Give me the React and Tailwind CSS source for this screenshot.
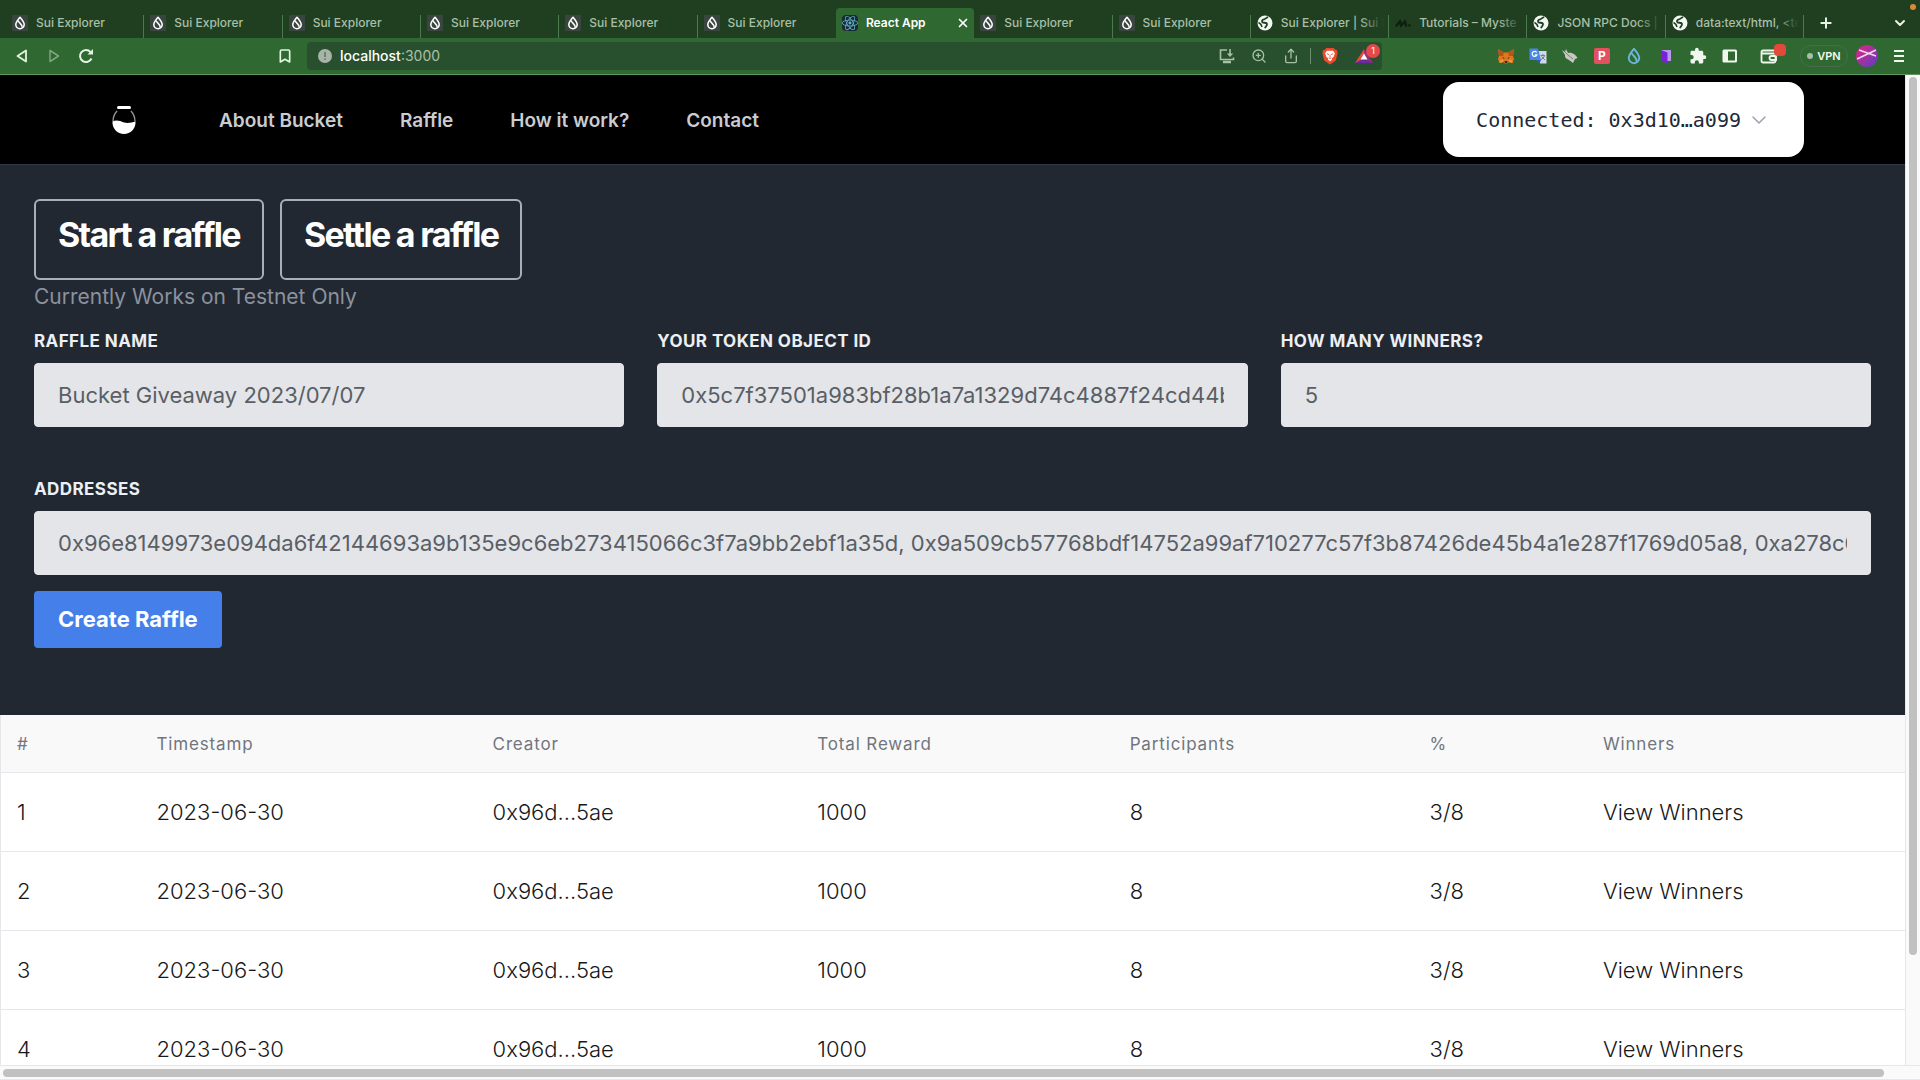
import { Bookmark, ChevronDown, Plus, Share, X, ZoomIn } from 'lucide-react';
import { MdExtension } from 'react-icons/md';
import { SiReact } from 'react-icons/si';

const tabs = [
  { title: 'Sui Explorer', icon: 'sui' },
  { title: 'Sui Explorer', icon: 'sui' },
  { title: 'Sui Explorer', icon: 'sui' },
  { title: 'Sui Explorer', icon: 'sui' },
  { title: 'Sui Explorer', icon: 'sui' },
  { title: 'Sui Explorer', icon: 'sui' },
  { title: 'React App', icon: 'react', active: true },
  { title: 'Sui Explorer', icon: 'sui' },
  { title: 'Sui Explorer', icon: 'sui' },
  { title: 'Sui Explorer | Sui D', icon: 'globe' },
  { title: 'Tutorials – Myste', icon: 'mysten' },
  { title: 'JSON RPC Docs |', icon: 'globe' },
  { title: 'data:text/html, <te', icon: 'globe' },
];

const links = ['About Bucket', 'Raffle', 'How it work?', 'Contact'];

const columns = [
  { name: '#', width: 'w-[7.35%]' },
  { name: 'Timestamp', width: 'w-[17.65%]' },
  { name: 'Creator', width: 'w-[17.05%]' },
  { name: 'Total Reward', width: 'w-[16.4%]' },
  { name: 'Participants', width: 'w-[15.75%]' },
  { name: '%', width: 'w-[9.1%]' },
  { name: 'Winners', width: '' },
];

const raffles = [1, 2, 3, 4].map((id) => ({
  id,
  timestamp: '2023-06-30',
  creator: '0x96d...5ae',
  reward: 1000,
  participants: 8,
  ratio: '3/8',
}));

function SuiDrop({ className, stroke = '#fff' }) {
  return (
    <svg viewBox="0 0 16 20" className={className} fill="none" stroke={stroke} strokeWidth="2.200" aria-hidden="true">
      <path d="M8 1.8C5.4 5.2 2 8.6 2 12.2A6 6 0 0 0 14 12.2C14 8.6 10.600 5.200 8 1.800Z" strokeLinejoin="round" />
      <path d="M5.400 6.200C5 9.500 11.500 10.500 11.200 16.800" />
    </svg>
  );
}

function Favicon({ type }) {
  if (type === 'react') {
    return (
      <span className="flex size-4 shrink-0 items-center justify-center rounded-sm bg-[#1b2a33]">
        <SiReact className="size-4 text-[#5fb6cc]" aria-hidden="true" />
      </span>
    );
  }
  if (type === 'globe') {
    return (
      <svg viewBox="0 0 16 16" className="size-4 shrink-0" aria-hidden="true">
        <circle cx="8" cy="8" r="7.500" fill="#f3f8f3" />
        <path d="M11.200 2.200C9 2.600 8.500 4.300 6.200 4.600C4.600 5.200 4.600 7 6 7.600C7.600 8 9.700 7.200 10 9.200C10.200 11 8.600 11 8 13.200" fill="none" stroke="#1f3f20" strokeWidth="1.800" />
        <path d="M1.500 7.500C3.500 8.500 4.500 10 5 12" fill="none" stroke="#1f3f20" strokeWidth="1.500" />
      </svg>
    );
  }
  if (type === 'mysten') {
    return (
      <svg viewBox="0 0 16 16" className="size-4 shrink-0" fill="none" stroke="#0d1f10" strokeWidth="2.400" strokeLinecap="round" aria-hidden="true">
        <path d="M1.500 10.500L5 6.500L6 10.500L10 6.500L11 10.500M14.500 10.200V10.300" />
      </svg>
    );
  }
  return (
    <span className="flex size-4 shrink-0 items-center justify-center bg-[#39453f]">
      <SuiDrop className="h-3.5 w-3" />
    </span>
  );
}

function TabStrip() {
  return (
    <div className="flex h-[38px] items-end bg-[#1f3f20] pl-1.5">
      <div role="tablist" className="flex min-w-0 flex-1 items-end">
        {tabs.map((tab, i) => {
          const divider = !tab.active && !tabs[i + 1]?.active;
          return (
            <div
              key={i}
              role="tab"
              aria-selected={!!tab.active}
              className={`flex h-[30px] min-w-0 flex-1 basis-0 items-center ${tab.active ? 'rounded-t bg-[#306832]' : ''}`}
            >
              <div className="flex min-w-0 flex-1 items-center gap-2 pr-1 pl-1.5">
                <Favicon type={tab.icon} />
                <span className="relative min-w-0 flex-1 overflow-hidden">
                  <span className={`block text-xs whitespace-nowrap ${tab.active ? 'font-semibold text-white' : 'font-medium text-[#a9bfa8]'}`}>
                    {tab.title}
                  </span>
                  {!tab.active && <span className="absolute inset-y-0 right-0 w-6 bg-linear-to-r from-transparent to-[#1f3f20]" />}
                </span>
                {tab.active && (
                  <button type="button" aria-label="Close tab" className="text-white">
                    <X className="size-3.5" strokeWidth={3} />
                  </button>
                )}
              </div>
              {divider && <span className="h-[23px] w-px self-end bg-[#4b7a4c]" />}
            </div>
          );
        })}
      </div>
      <div className="flex h-[30px] w-[116px] items-center justify-between pr-3 pl-3.5 text-[#e8f3e6]">
        <button type="button" aria-label="New tab">
          <Plus className="size-4" strokeWidth={3} />
        </button>
        <button type="button" aria-label="Search tabs">
          <ChevronDown className="size-4" strokeWidth={3} />
        </button>
      </div>
    </div>
  );
}

function ToolButton({ label, className = 'w-8', children }) {
  return (
    <button type="button" aria-label={label} className={`flex h-8 items-center justify-center ${className}`}>
      {children}
    </button>
  );
}

function Extensions() {
  return (
    <div className="ml-auto flex items-center pr-2 text-[#f0f8ee]">
      <ToolButton label="Wallet fox">
        <svg viewBox="0 0 18 16" className="h-4 w-[18px]">
          <path d="M1 1L7 4.500H11L17 1L16 8L17 11L15.500 15L11.500 14L10 15.500H8L6.500 14L2.500 15L1 11L2 8Z" fill="#e2761b" />
          <path d="M1 1L7 4.500L6 8L2 8ZM17 1L11 4.500L12 8L16 8Z" fill="#b5541d" />
          <path d="M5 9L7.500 10L7 11ZM13 9L10.500 10L11 11ZM7.500 13H10.500L10 15H8Z" fill="#22303a" />
          <path d="M3 12L6 11.500L6.500 14L2.500 15ZM15 12L12 11.500L11.500 14L15.500 15Z" fill="#f5923a" />
        </svg>
      </ToolButton>
      <ToolButton label="Translate">
        <svg viewBox="0 0 18 16" className="h-4 w-[18px]">
          <path d="M8 3H17.500V15.500H11Z" fill="#cfd8e6" />
          <path d="M11.500 7.500H16M13.800 6V7.500M15.500 7.500C15 9.500 13.500 11 12 11.500M12.500 8.500L16 12" stroke="#6e7f96" fill="none" />
          <path d="M0.500 0.500H9L12 12H1.500C1 12 0.500 11.600 0.500 11Z" fill="#4a86e8" />
          <path d="M7.800 4.500A2.500 2.500 0 1 0 8 6.800H5.800" stroke="#fff" strokeWidth="1.200" fill="none" />
          <path d="M7.500 12H12L10.500 15.500Z" fill="#2c5cc0" />
        </svg>
      </ToolButton>
      <ToolButton label="Feather">
        <svg viewBox="0 0 18 16" className="h-4 w-[18px]">
          <path d="M1 2L4 4L5 1L7 5C11 4 15 7 16.500 10L14 11L12 15L8 12C5 11 3.500 9 4 7Z" fill="#c6c9c2" />
          <path d="M7 7L12 11M4 4L8 8" stroke="#7d857b" fill="none" />
        </svg>
      </ToolButton>
      <ToolButton label="Pocket">
        <span className="flex size-4 items-center justify-center rounded-xs bg-[#e2515f] text-xs font-bold text-white">P</span>
      </ToolButton>
      <ToolButton label="Sui wallet">
        <SuiDrop className="h-[18px] w-3.5" stroke="#6cb5d8" />
      </ToolButton>
      <ToolButton label="Notebook">
        <svg viewBox="0 0 14 16" className="h-4 w-3.5">
          <path d="M2 2H12V13H2Z" fill="#b79af0" />
          <path d="M2 2L8.500 4.500V15.500L2 13Z" fill="#7a22d8" />
        </svg>
      </ToolButton>
      <ToolButton label="Extensions">
        <MdExtension className="size-[18px]" />
      </ToolButton>
      <ToolButton label="Sidebar">
        <svg viewBox="0 0 16 14" className="h-3.5 w-4">
          <rect x="1.500" y="1.500" width="12.500" height="11" rx="0.500" fill="none" stroke="currentColor" strokeWidth="2" />
          <path d="M2 2H6V12H2Z" fill="currentColor" />
        </svg>
      </ToolButton>
      <ToolButton label="Wallet" className="relative w-[46px]">
        <svg viewBox="0 0 18 16" className="h-4 w-[18px]" fill="none" stroke="currentColor" strokeWidth="1.800">
          <rect x="1.500" y="2.500" width="14" height="12" rx="1.500" />
          <path d="M2 5.500H15M16 8H11.500A2 2 0 0 0 11.500 12H16Z" />
        </svg>
        <span className="absolute top-1 right-1.5 size-3 rounded bg-[#e2493b]" />
      </ToolButton>
      <button type="button" className="ml-2 flex h-[22px] w-12 items-center justify-center gap-1 rounded-full border border-[#4a6a50] text-[11px] font-semibold">
        <span className="size-1.5 rounded-full bg-[#a8bfa8]" />
        VPN
      </button>
      <ToolButton label="Profile" className="w-[38px]">
        <svg viewBox="0 0 22 22" className="size-[22px]">
          <defs>
            <linearGradient id="avatar" x1="0" y1="0" x2="1" y2="1">
              <stop offset="0.2" stopColor="#c82a8c" />
              <stop offset="1" stopColor="#5a3fc8" />
            </linearGradient>
          </defs>
          <circle cx="11" cy="11" r="11" fill="url(#avatar)" />
          <path d="M1 14L20 5M3 5L20 11" stroke="#f6d8ee" strokeWidth="1.500" fill="none" />
        </svg>
      </ToolButton>
      <ToolButton label="Menu" className="w-[26px]">
        <svg viewBox="0 0 12 14" className="h-3.5 w-3" stroke="currentColor" strokeWidth="2">
          <path d="M1 2H11M1 7H11M1 12H11" />
        </svg>
      </ToolButton>
    </div>
  );
}

function Toolbar() {
  return (
    <div className="flex h-[37px] items-center border-b border-[#5c9a5e] bg-[#306832]">
      <div className="flex w-[307px] shrink-0 items-center px-1.5 text-[#e4f4e0]">
        <ToolButton label="Back">
          <svg viewBox="0 0 12 14" className="h-3.5 w-3" fill="none" stroke="currentColor" strokeWidth="1.800" strokeLinejoin="round">
            <path d="M10 1.500V12.500L1.500 7Z" />
          </svg>
        </ToolButton>
        <ToolButton label="Forward">
          <svg viewBox="0 0 12 14" className="h-3.5 w-3" fill="none" stroke="#7fa57f" strokeWidth="1.500" strokeLinejoin="round">
            <path d="M2 1.500V12.500L10.500 7Z" />
          </svg>
        </ToolButton>
        <ToolButton label="Reload">
          <svg viewBox="0 0 16 16" className="size-4" fill="none" stroke="currentColor" strokeWidth="2">
            <path d="M13.500 10.500A6 6 0 1 1 12.500 4" />
            <path d="M9.500 6.500H15V1Z" fill="currentColor" stroke="none" />
          </svg>
        </ToolButton>
        <ToolButton label="Bookmark" className="ml-auto w-8">
          <Bookmark className="size-4" strokeWidth={2.5} />
        </ToolButton>
      </div>
      <div className="flex h-7 min-w-0 flex-1 items-center rounded bg-[#29502e] pl-[11px] text-[#a9c0a8]">
        <svg viewBox="0 0 14 14" className="size-3.5 shrink-0" aria-hidden="true">
          <circle cx="7" cy="7" r="7" fill="#a8b4a8" />
          <path d="M7 3V8M7 9.500V11" stroke="#5d7a60" strokeWidth="1.600" />
        </svg>
        <p className="ml-2 flex-1 text-sm">
          <span className="font-medium text-white">localhost</span>:3000
        </p>
        <ToolButton label="Install">
          <svg viewBox="0 0 16 16" className="size-4" fill="none" stroke="currentColor" strokeWidth="1.600">
            <path d="M8 2H1.500V11.500H14.500V9.500" />
            <path d="M11 1V7" />
            <path d="M7.800 5.500H14.200L11 9Z" fill="currentColor" stroke="none" />
            <path d="M4 14H12" strokeWidth="2.500" />
          </svg>
        </ToolButton>
        <ToolButton label="Zoom">
          <ZoomIn className="size-4" />
        </ToolButton>
        <ToolButton label="Share">
          <Share className="size-4" />
        </ToolButton>
        <span className="mx-[3px] h-4 w-px bg-[#6f9070]" />
        <ToolButton label="Shields">
          <svg viewBox="0 0 18 20" className="h-[18px] w-4">
            <path d="M5 1H13L15 3L17 3.500L17.500 7L15.500 15L9 19.500L2.500 15L0.500 7L1 3.500L3 3Z" fill="#ee4b2b" />
            <path d="M5.500 4H12.500L14.500 7L13 11L11 12.500L11.500 14L9 16L6.500 14L7 12.500L5 11L3.500 7Z" fill="#fff" />
            <path d="M5.500 7.500L8 8.500M12.500 7.500L10 8.500M9 9V11.500M7.500 12L9 12.800L10.500 12" stroke="#ee4b2b" fill="none" />
          </svg>
        </ToolButton>
        <ToolButton label="Rewards" className="relative w-9">
          <svg viewBox="0 0 18 16" className="h-4 w-[18px]">
            <path d="M9 1L0 15H9Z" fill="#e8473a" />
            <path d="M9 1L18 15H9Z" fill="#9e2f72" />
            <path d="M0 15H18L9 10Z" fill="#6a2a9a" />
            <path d="M9 5.500L12.500 11.500H5.500Z" fill="#fff" />
          </svg>
          <span className="absolute top-1 right-0.5 flex size-3.5 items-center justify-center rounded-full bg-[#e5484a] text-[9px] text-white">1</span>
        </ToolButton>
      </div>
      <div className="flex w-[538px] shrink-0">
        <Extensions />
      </div>
    </div>
  );
}

function BucketLogo() {
  return (
    <svg viewBox="0 0 24 28" className="h-7 w-6" role="img" aria-label="Bucket">
      <rect x="5" y="0" width="14" height="3" rx="1.500" fill="#fff" />
      <path d="M5 5C2.300 8 1 11 1 15.500M19 5C21.700 8 23 11 23 15.500" fill="none" stroke="#999" strokeWidth="1.300" />
      <path d="M0.500 15.500C4.500 13.500 8 15 12 16.500C16 17.500 20 16.500 23.500 15.500C24 22.500 18.500 28 12 28S0 22.500 0.500 15.500Z" fill="#fff" />
    </svg>
  );
}

function NavBar() {
  return (
    <header className="flex h-[90px] items-center justify-between border-b border-[#2f3a44] bg-black px-[101px]">
      <nav className="flex items-center">
        <a href="#home" className="mr-[72px] px-[11px]">
          <BucketLogo />
        </a>
        <div className="flex gap-[57px] pt-1">
          {links.map((link) => (
            <a key={link} href="#section" className="text-[19px] font-semibold text-[#c9ccd0]">
              {link}
            </a>
          ))}
        </div>
      </nav>
      <button type="button" className="flex h-[75px] items-center gap-1.5 rounded-2xl bg-white px-[33px] font-['DejaVu_Sans_Mono',monospace] text-xl text-[#1f2937]">
        Connected: 0x3d10…a099
        <ChevronDown className="size-6 text-gray-400" strokeWidth={1.5} />
      </button>
    </header>
  );
}

function Field({ id, label, value }) {
  return (
    <div className="min-w-0">
      <label htmlFor={id} className="block text-[17px] leading-6 font-bold tracking-wide text-[#eceff3] uppercase">
        {label}
      </label>
      <input
        id={id}
        defaultValue={value}
        className="mt-2.5 h-16 w-full rounded border border-[#e3e5e9] bg-[#e3e5e9] px-[23px] text-[22px] font-normal text-[#5a5e65] outline-none"
      />
    </div>
  );
}

function RaffleForm() {
  return (
    <section className="bg-[#212832] px-[34px] pt-[34px] pb-[67px]">
      <div className="flex gap-4">
        {['Start a raffle', 'Settle a raffle'].map((text) => (
          <button
            key={text}
            type="button"
            className="h-[81px] rounded-md border-2 border-[#a9afba] px-[22px] pb-2.5 text-[34px] leading-10 font-bold tracking-tighter text-white"
          >
            {text}
          </button>
        ))}
      </div>
      <p className="text-[21px] leading-[34px] text-[#8b929d]">Currently Works on Testnet Only</p>
      <form className="mt-[15px]" onSubmit={(e) => e.preventDefault()}>
        <div className="grid grid-cols-3 gap-[33px]">
          <Field id="name" label="Raffle name" value="Bucket Giveaway 2023/07/07" />
          <Field id="token" label="Your token object ID" value="0x5c7f37501a983bf28b1a7a1329d74c4887f24cd44b7a0e" />
          <Field id="winners" label="How many winners?" value="5" />
        </div>
        <div className="mt-[50px]">
          <Field
            id="addresses"
            label="Addresses"
            value="0x96e8149973e094da6f42144693a9b135e9c6eb273415066c3f7a9bb2ebf1a35d, 0x9a509cb57768bdf14752a99af710277c57f3b87426de45b4a1e287f1769d05a8, 0xa278c0"
          />
        </div>
        <button type="submit" className="mt-4 h-[57px] rounded bg-[#4580ea] px-6 text-[22px] font-bold text-white">
          Create Raffle
        </button>
      </form>
    </section>
  );
}

function RaffleTable() {
  return (
    <table className="w-full table-fixed border-l border-gray-200 bg-white text-left">
      <thead>
        <tr className="h-[57px] border-b border-gray-200 bg-[#f9f9fa]">
          {columns.map((col) => (
            <th key={col.name} className={`px-4 pt-0.5 text-[17px] font-normal tracking-wider text-[#71757c] ${col.width}`}>
              {col.name}
            </th>
          ))}
        </tr>
      </thead>
      <tbody>
        {raffles.map((raffle) => (
          <tr key={raffle.id} className="h-[79px] border-b border-gray-200 text-[22px] font-light text-[#16181b] *:px-4 *:pt-0.5">
            <td>{raffle.id}</td>
            <td>{raffle.timestamp}</td>
            <td>{raffle.creator}</td>
            <td>{raffle.reward}</td>
            <td>{raffle.participants}</td>
            <td>{raffle.ratio}</td>
            <td>
              <button type="button">View Winners</button>
            </td>
          </tr>
        ))}
      </tbody>
    </table>
  );
}

export default function App() {
  return (
    <div className="relative flex h-screen flex-col overflow-hidden bg-[#fafafa] font-['Inter',sans-serif]">
      <TabStrip />
      <Toolbar />
      <div className="flex min-h-0 flex-1">
        <main className="min-w-0 flex-1 overflow-hidden">
          <NavBar />
          <RaffleForm />
          <RaffleTable />
        </main>
        <div aria-hidden="true" className="w-[15px] shrink-0 border-l border-gray-200 bg-[#fafafa] px-[3px] py-0.5">
          <div className="h-[89%] rounded-full bg-[#c1c1c1]" />
        </div>
      </div>
      <div aria-hidden="true" className="h-[15px] shrink-0 border-y border-gray-200 bg-[#fafafa] px-[3px] py-[3px]">
        <div className="h-2 w-[98.3%] rounded-full bg-[#c1c1c1]" />
      </div>
      <span className="absolute top-1 right-1 size-1.5 rounded-full bg-[#d98a35]" />
    </div>
  );
}
